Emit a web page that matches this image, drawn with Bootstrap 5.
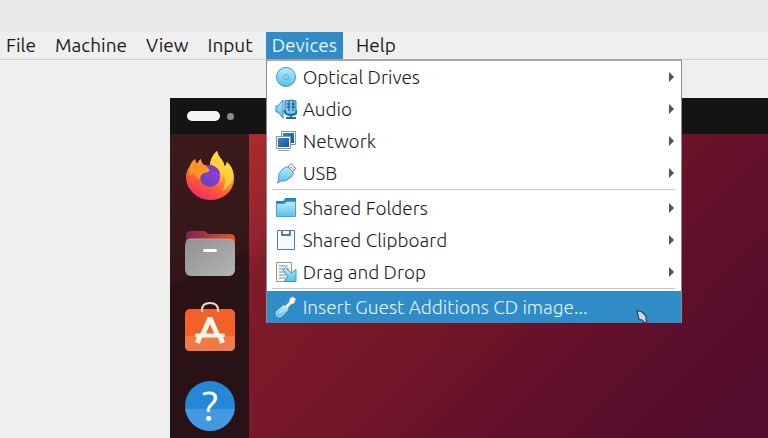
<!DOCTYPE html>
<html lang="en">
<head>
<meta charset="utf-8">
<meta name="viewport" content="width=device-width, initial-scale=1">
<title>Virtual machine</title>
<link href="https://cdn.jsdelivr.net/npm/bootstrap@5.3.0/dist/css/bootstrap.min.css" rel="stylesheet">
<style>
body { font-family: Ubuntu, "Noto Sans", "Open Sans", sans-serif; font-size: 19px; font-weight: 300; line-height: 24px; color: #1c1c1c; background: #efefef; }
.titlebar { height: 32px; background: #e8e8e8; }
.menubar { border-bottom: 1px solid #d0d0d0; gap: 7px; }
.menubar-btn { padding: 1px 6px 2px; color: inherit; background: none; border: 0; white-space: nowrap; }
.menubar-btn.active { color: #e4f3fc; background: #308cc6; }
.menubar .device-menu { top: 27px; left: 0; width: 416px; margin: 0; padding: 0; font-size: inherit; color: inherit; background: #fff; border: 1px solid #8b8b8b; border-top: 2px solid #a8a8a8; border-radius: 0; }
.device-menu .dropdown-item { display: flex; align-items: center; gap: 6px; padding: 4px 6px 4px 8px; font-weight: inherit; color: inherit; }
.device-menu .dropdown-item svg { flex: none; }
.device-menu .dropdown-item.active { color: #e4f3fc; background: #308cc6; margin-bottom: -1px; }
.device-menu .dropdown-divider { margin: 0 6px 2px 5px; border-color: #c6c6c6; opacity: 1; }
.guest { margin: 38px 0 0 170px; background: #141414; }
.topbar { height: 36px; padding-left: 17px; gap: 7px; }
.pill { width: 33px; height: 10px; border-radius: 5px; background: #f4f4f4; }
.dot { width: 7px; height: 7px; border-radius: 50%; background: #8a8a8a; }
.dock { width: 79px; padding-top: 17px; gap: 27px; background: linear-gradient(155deg, #3b1a1a 0%, #351718 44%, #2b1315 45%, #271217 100%); }
.dock a { width: 50px; height: 50px; }
.dock svg { display: block; overflow: visible; }
.wallpaper { background: linear-gradient(134deg, #aa2c2a 0, #952430 72px, #801b2a 100px, #751727 250px, #64112a 370px, #560d2b 500px, #500b2f 620px); }
.pointer { top: 248px; right: 32px; }
</style>
<script src="https://cdn.jsdelivr.net/npm/bootstrap@5.3.0/dist/js/bootstrap.bundle.min.js" defer></script>
</head>
<body class="d-flex flex-column min-vh-100 overflow-hidden">
<svg width="0" height="0" class="position-absolute" aria-hidden="true">
  <defs>
    <linearGradient id="sky" x1="0" y1="0" x2="0" y2="1"><stop stop-color="#b9ecff"/><stop offset="1" stop-color="#54bfe9"/></linearGradient>
    <linearGradient id="blue" x1="0" y1="0" x2="1" y2="1"><stop stop-color="#3f82c6"/><stop offset="1" stop-color="#1556a0"/></linearGradient>
    <linearGradient id="fox" x1=".8" y1="0" x2=".3" y2="1"><stop stop-color="#fff04a"/><stop offset=".4" stop-color="#ffab2e"/><stop offset=".7" stop-color="#ff5a32"/><stop offset="1" stop-color="#f02674"/></linearGradient>
    <linearGradient id="globe" x1="1" y1="0" x2="0" y2="1"><stop stop-color="#a63bd8"/><stop offset="1" stop-color="#5546bd"/></linearGradient>
    <linearGradient id="tab"><stop stop-color="#7b2456"/><stop offset="1" stop-color="#e35627"/></linearGradient>
    <linearGradient id="front" x1="0" y1="0" x2="1" y2="1"><stop stop-color="#919191"/><stop offset="1" stop-color="#b4b4b4"/></linearGradient>
  </defs>
</svg>
<header>
  <div class="titlebar"></div>
  <nav class="menubar d-flex" aria-label="Main menu">
    <button type="button" class="menubar-btn">File</button>
    <button type="button" class="menubar-btn">Machine</button>
    <button type="button" class="menubar-btn">View</button>
    <button type="button" class="menubar-btn">Input</button>
    <div class="position-relative">
      <button type="button" class="menubar-btn active" aria-expanded="true">Devices</button>
      <div class="dropdown-menu device-menu show">
        <button type="button" class="dropdown-item">
          <svg width="22" height="24" viewBox="0 0 22 24"><circle cx="11" cy="12" r="9.5" fill="url(#sky)" stroke="#4296c4"/><circle cx="11" cy="12" r="2.3" fill="#d8f5ff" stroke="#4296c4"/><circle cx="11" cy="12" r=".8" fill="#2875a5"/></svg>
          <span class="flex-grow-1">Optical Drives</span>
          <svg width="7" height="12" viewBox="0 0 7 12"><path d="M1 1 6 6 1 11z" fill="#555"/></svg>
        </button>
        <button type="button" class="dropdown-item">
          <svg width="22" height="24" viewBox="0 0 22 24"><path d="M1 9h2l5-6v18l-5-6H1z" fill="url(#sky)" stroke="#388bc0"/><path d="M10 4q6-2 11 0v12q-5 3-11 0z" fill="#74ccef" stroke="#2578af"/><path d="M11.500 7h3.500m1.500 0H20M11.500 10h3.500m1.500 0H20M14 4v10m4-10v10" stroke="#164b7c" fill="none"/><path d="M9.500 13q0 5 6.500 5t5.500-5M16 18v3m-5 0h10" fill="none" stroke="#1c6ca8" stroke-width="2"/></svg>
          <span class="flex-grow-1">Audio</span>
          <svg width="7" height="12" viewBox="0 0 7 12"><path d="M1 1 6 6 1 11z" fill="#555"/></svg>
        </button>
        <button type="button" class="dropdown-item">
          <svg width="22" height="24" viewBox="0 0 22 24"><path d="M6.500 2.500h14v13h-14z" fill="#f4f8fb" stroke="#8396a9"/><path d="M8 4h11v10H8z" fill="url(#blue)"/><path d="M1.500 7.500h14v12h-14z" fill="#f4f8fb" stroke="#8396a9"/><path d="M3 9h11v9H3z" fill="url(#blue)"/><path d="M3 21.500h11" stroke="#9aa6b1"/></svg>
          <span class="flex-grow-1">Network</span>
          <svg width="7" height="12" viewBox="0 0 7 12"><path d="M1 1 6 6 1 11z" fill="#555"/></svg>
        </button>
        <button type="button" class="dropdown-item">
          <svg width="22" height="24" viewBox="0 0 22 24"><path d="m12 7 4-4.500 5 5-4.500 4z" fill="#f5f5f5" stroke="#777"/><path d="m15.500 6 .8.800m1.200.7.8.800" stroke="#444"/><path d="M8 8q3-3 5-2l5 5q1 2-2 5-5 5-10 4l-3.500 2L4 17.500Q2 13 8 8z" fill="url(#sky)" stroke="#4398c5"/></svg>
          <span class="flex-grow-1">USB</span>
          <svg width="7" height="12" viewBox="0 0 7 12"><path d="M1 1 6 6 1 11z" fill="#555"/></svg>
        </button>
        <hr class="dropdown-divider">
        <button type="button" class="dropdown-item">
          <svg width="22" height="24" viewBox="0 0 22 24"><path d="M1.500 5.500h7l2-3h10v8h-19z" fill="#2c87be" stroke="#277bb0"/><path d="M1.500 7.500h8l2-2h9v15h-19z" fill="url(#sky)" stroke="#46a2cf"/></svg>
          <span class="flex-grow-1">Shared Folders</span>
          <svg width="7" height="12" viewBox="0 0 7 12"><path d="M1 1 6 6 1 11z" fill="#555"/></svg>
        </button>
        <button type="button" class="dropdown-item">
          <svg width="22" height="24" viewBox="0 0 22 24"><path d="M2.500 2.500h17v19h-17z" fill="#f5fbff" stroke="#3a86b8"/><path d="M7 3v4h8V3" fill="#f0f2f4" stroke="#424e59" stroke-width="1.400"/></svg>
          <span class="flex-grow-1">Shared Clipboard</span>
          <svg width="7" height="12" viewBox="0 0 7 12"><path d="M1 1 6 6 1 11z" fill="#555"/></svg>
        </button>
        <button type="button" class="dropdown-item">
          <svg width="22" height="24" viewBox="0 0 22 24"><path d="M1.500 2.500h15v19h-15z" fill="#fafafa" stroke="#999"/><path d="M4 6h9M4 9h10M4 12h6M4 15h7M4 18h8" stroke="#858b91"/><path d="m8 10 2.500-2.500 6 5.500L21 9.500v12H9l4-4.500z" fill="url(#sky)" stroke="#3898c7"/></svg>
          <span class="flex-grow-1">Drag and Drop</span>
          <svg width="7" height="12" viewBox="0 0 7 12"><path d="M1 1 6 6 1 11z" fill="#555"/></svg>
        </button>
        <hr class="dropdown-divider">
        <button type="button" class="dropdown-item active">
          <svg width="22" height="24" viewBox="0 0 22 24"><path d="m9.500 12 5-5 .5-3.500 3-1.500 2.500 2L19 8l-3 1-4.500 5z" fill="#fff" stroke="#d7e4ec" stroke-width=".7"/><path d="m2 16 6.500-5.500q3 1 4.500 4L7 21q-3 2-5 0-2-2.500 0-5z" fill="url(#sky)" stroke="#d5f4ff" stroke-width=".7"/><path d="m4 18.500 6-5.500" stroke="#e6faff"/></svg>
          <span class="flex-grow-1">Insert Guest Additions CD image...</span>
        </button>
        <svg class="pointer position-absolute" width="14" height="15" viewBox="0 0 14 15" aria-hidden="true"><path d="M2 1.500 7 3l4 4v3.500l1 2.500-2.500.5L7.500 11 4 10.500z" fill="#c9dceb" stroke="#32414f" stroke-width="1.200" stroke-linejoin="round"/></svg>
      </div>
    </div>
    <button type="button" class="menubar-btn">Help</button>
  </nav>
</header>
<main class="guest d-flex flex-column flex-grow-1">
  <div class="topbar d-flex align-items-center"><span class="pill"></span><span class="dot"></span></div>
  <div class="d-flex flex-grow-1">
    <nav class="dock d-flex flex-column align-items-center" aria-label="Dock">
      <a href="#" aria-label="Firefox">
        <svg width="50" height="50" viewBox="0 0 50 50"><path d="M5 15q2-5 5-7 0 3 2 5 1-3 4-5 0 4 3 6l6 1Q25 6 32 0q1 5 5 9 2 3 3 7l2-5q7 7 7 16 0 10-7 16t-17 6q-10 0-17-7-7-7-7-16 0-6 4-11z" fill="url(#fox)"/><path d="M32 0q-6 5-7 14 14 2 10 17 3-3 3-9 5 9-1 18 11-5 11-17 0-7-6-12l-2 5q-1-4-3-7-4-4-5-9z" fill="#ffd840" opacity=".8"/><circle cx="25" cy="26" r="10" fill="url(#globe)"/><path d="M19 16q5-4 10-1 6 3 6 9-4-5-10-4z" fill="#7a3ccc"/><path d="M5 15q2-5 5-7 0 3 2 5 1-3 4-5 0 4 3 6 4 2 6 5-2 3-6 3-4 2-4 6-4-1-5-6-2 0-5 3 0-6 0-10z" fill="#ff9528"/></svg>
      </a>
      <a href="#" aria-label="Files">
        <svg width="50" height="50" viewBox="0 0 50 50"><path d="M1 8q0-5 5-5h12q2 0 3 1l2 2h22q5 0 5 5v10H1z" fill="url(#tab)"/><rect y="11" width="50" height="37" rx="6" fill="url(#front)"/><path d="M1 14q1-3 5-3h38q4 0 5 3" fill="none" stroke="#b8a39c"/><path d="M19.500 22.500h11" stroke="#fff" stroke-width="3" stroke-linecap="round"/></svg>
      </a>
      <a href="#" aria-label="App Center">
        <svg width="50" height="50" viewBox="0 0 50 50"><rect y="4" width="50" height="42" rx="5" fill="#f26128"/><path d="M0 31h50v10q0 5-5 5H5q-5 0-5-5z" fill="#f17b47"/><path d="M17 7V5q0-7 8-7t8 7v2" fill="none" stroke="#efd8bd" stroke-width="2"/><path d="m17.500 30 7.500-17 7.500 17M15 31l-2.500 7M35 31l2.500 7" fill="none" stroke="#fff5eb" stroke-width="5" stroke-linejoin="bevel"/><path d="M12 30.500h26" stroke="#fff5eb" stroke-width="4" stroke-linecap="round"/></svg>
      </a>
      <a href="#" aria-label="Help">
        <svg width="50" height="50" viewBox="0 0 50 50"><circle cx="25" cy="24" r="25" fill="#2587d9"/><path d="M.2 27a25 25 0 0 0 49.600 0z" fill="#4299df"/><text x="25" y="39" text-anchor="middle" font-size="42" font-weight="400" fill="#fff">?</text></svg>
      </a>
    </nav>
    <div class="wallpaper flex-grow-1"></div>
  </div>
</main>
</body>
</html>
